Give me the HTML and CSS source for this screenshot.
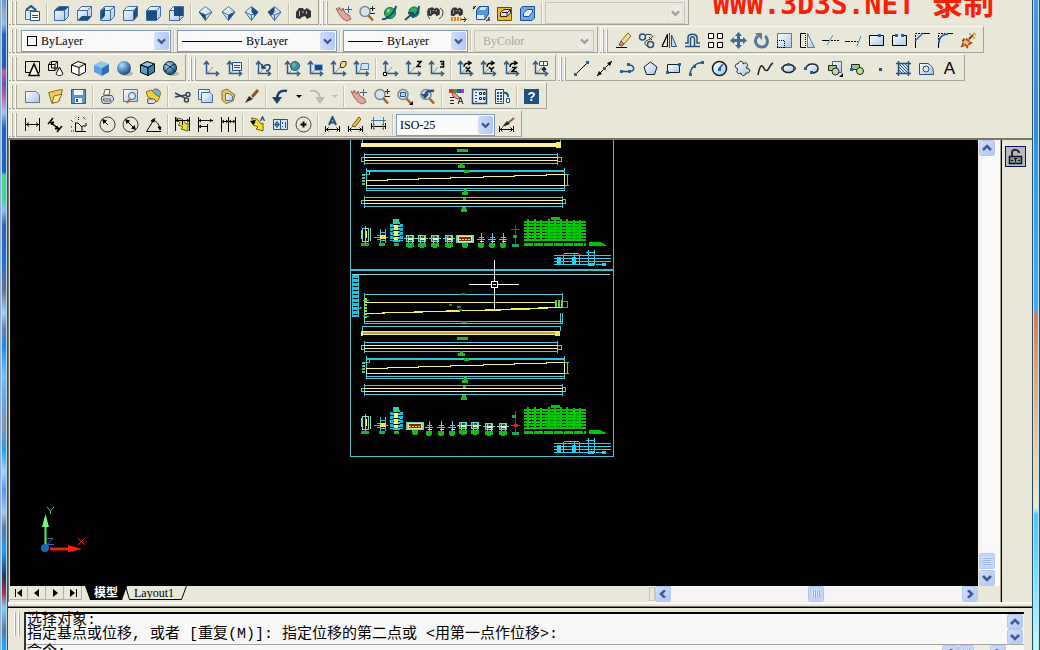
FILE: index.html
```html
<!DOCTYPE html>
<html lang="zh-CN">
<head>
    <meta charset="UTF-8">
    <meta name="viewport" content="width=device-width, initial-scale=1.0">
    <title>CAD</title>
    <link rel="stylesheet" href="styles.css">
</head>
<body>
    <!-- shared icon parts -->
    <svg class="defs" aria-hidden="true">
        <defs>
            <linearGradient id="ice" x1="0" y1="0" x2="1" y2="1"><stop offset="0" stop-color="#fff"/><stop offset="1" stop-color="#a9c4e4"/></linearGradient>
            <radialGradient id="ball" cx=".35" cy=".3" r=".8"><stop offset="0" stop-color="#b8dcf6"/><stop offset=".5" stop-color="#4c8cc4"/><stop offset="1" stop-color="#173d66"/></radialGradient>
            <g id="cube"><path fill="url(#ice)" stroke="#3d6d9e" d="M1.5 5.5L5.5 1.5H15.5V11.5L11.5 15.5H1.5ZM1.5 5.5H11.5V15.5M11.5 5.5L15.5 1.5"/></g>
            <g id="gem"><path fill="url(#ice)" stroke="#3d6d9e" d="M8.5 1.5L15 7 8.5 15.5 2 7ZM2 7L8.5 10 15 7M8.5 10V15.5"/></g>
            <g id="axes" fill="none" stroke="#2f5c8a"><path stroke="#7c93a8" d="M4 14L10 7"/><path stroke-width="1.500" d="M3.500 2V13.500H15M1 4.500L3.500 1.500 6 4.500M13 11.500L15.500 13.500 13 16"/></g>
            <g id="lens"><path stroke="#a5622a" stroke-width="2.500" d="M10 10L15 15.500"/><circle cx="7" cy="6.500" r="5" fill="#d4e4ee" stroke="#778793" stroke-width="1.500"/></g>
            <g id="hand"><path fill="#dfa79c" stroke="#a45e58" d="M1 3L4 5 4 2 7 6 8 3 10 8 14 10 16 14 12 16 8 14 4 9Z"/><path stroke="#2f6a96" d="M13.500 1V8M10 4.500H17"/></g>
            <g id="cam"><path fill="#333" d="M1 7L4 3H8L9 5 12 3 16 6V12L12 14 10 11 7 12 5 14 1 13Z"/><path fill="none" stroke="#bbb" d="M4.500 6V11M11.500 6V9M7 7H9"/></g>
            <g id="dim" fill="none" stroke="#000"><path d="M1.500 2V15M15.500 2V15M2 8.500H15M5 6.500L2.500 8.500 5 10.500M12 6.500L14.500 8.500 12 10.500"/></g>
            <g id="dimlow" fill="none" stroke="#000"><path d="M1.500 10V16M15.500 10V16M2 13.500H15M4.500 11.500L2.500 13.500 4.500 15.500M12.500 11.500L14.500 13.500 12.500 15.500"/></g>
            <g id="bolt"><path fill="#f2dc2c" stroke="#6e5e10" d="M2 2L8 3 12 8 14 7 14 15 7 13 9 11 4 9 6 7Z"/></g>
            <path id="chevron" fill="none" stroke="#3d5a90" stroke-width="2.500" d="M1 2L5 6L9 2"/>

            <g id="grid-table" fill="none" stroke="#00c800">
                <path d="M524 409.500H586M524 412.500H586M524 415.500H586M524 418.500H586M524 421.500H586M524 424.500H586M524 427.500H586" stroke-width="2"/>
                <path d="M527.500 407V428M534.500 407V428M540.500 408V428M549 407V429M555 405V429M561 407V429M567 407V429M574 408V429M579.500 408V427" stroke-width="2" stroke-dasharray="5 1"/>
                <path d="M545 420H562M568 420H580" stroke-width="17" opacity=".7"/>
                <path d="M551 406H560M524 432H586" stroke-width="3" stroke-dasharray="9 1"/>
                <path fill="#00c800" d="M589 430.500L601 431 606 433.500H589Z"/>
            </g>
            <g id="titleblock" fill="none" stroke="#22d4f0">
                <path d="M554 443.500H611M554 446.500H611M554 449.500H611M554 452.500H594M564 441.500H579M596 452.500H606" />
                <path d="M588.500 438V453M594.500 438V453M563.500 442V453M574.500 442V453M579.500 442V453M586 440.500H594"/>
                <path d="M557 448H561M572 448H576" stroke-width="7"/>
                <path d="M588 452H594M602 452H606" stroke-width="3"/>
            </g>
            <g id="node">
                <path fill="#245850" stroke="#6fd8c4" d="M-3.500 -3.500H3.500V2.500H-3.500ZM-6 -.5H6M-1.500 -4V4M2.500 -4V4"/>
                <path stroke="#ffff8c" stroke-width="2" d="M-2 0H3"/>
                <path stroke="#18b818" stroke-width="4" d="M-4 6H4M0 4V9"/>
            </g>
            <g id="tick">
                <path stroke="#50d0dc" d="M0.500 -6V4M-4 0.500H4M-2 -1.500H3"/><path stroke="#dcf0a0" d="M-1 2.500H3"/>
                <path stroke="#18b818" stroke-width="4" d="M-3 6H3M0 5V9"/>
            </g>
            <g id="plate">
                <path fill="#802800" stroke="#6fd8c4" stroke-width="2" d="M-8 -3H8V3H-8Z"/><path stroke="#ffd860" stroke-dasharray="2 1" d="M-6 .5H6"/><path fill="none" stroke="#e8e8a0" d="M-6.500 -2.500H6.500V2.500H-6.500Z"/>
                <path stroke="#18b818" stroke-width="4" d="M-3 6H3M0 5V9"/>
            </g>
            <g id="columns">
                <path fill="none" stroke="#7fdcc0" d="M362.500 416.500H368.500V429.500H362.500ZM365.500 414V433M361.500 418V427M370.500 416V429"/><path stroke="#ffff60" d="M366.500 419V426"/>
                <path fill="none" stroke="#30c8d8" d="M374 425.500H388M380.500 417V432M385.500 417V431M380 420.500H385M380 428.500H386M377 423.500H380M377 427.500H380"/><path stroke="#ffe040" stroke-width="4" d="M380 425H386"/>
                <path stroke="#14bcd8" stroke-width="3" stroke-dasharray="3 1" d="M391.500 412V429M401.500 412V429"/><path stroke="#28c8c8" stroke-width="7" stroke-dasharray="2 1" d="M396.500 410V430"/><path stroke="#ffff50" stroke-width="4" stroke-dasharray="5 1" d="M396 413V428"/><path stroke="#30d0a0" stroke-width="6" d="M396 407V411"/>
                <path stroke="#18b818" stroke-width="3" d="M361 432H369M379 432H385M394 432H399"/>
            </g>
            <g id="beams" fill="none">
                <path stroke="#50c8d8" d="M362 326.500H561M362.500 326V331M560.500 326V331M364 342.500H558M364 351.500H558M364.500 341V353M557.500 341V353M361 345.500H364M361.500 345V350M361 349.500H364M558 345.500H561V349.500H558M366 376.500H565M366 378.500H565M366.500 356V378M564.500 356V379M567.500 362V373M565 362.500H569M565 373.500H569M364 385.500H563M364 394.500H563M364.500 384V396M562.500 384V396M361 388.500H364M361 391.500H364M361.500 388V392M562 387.500H565V391.500H562"/>
                <path stroke="#30c4d8" stroke-width="2" d="M366 359H565"/>
                <path stroke="#38c8a8" stroke-width="3" stroke-dasharray="2 1" d="M363 362V374"/>
                <path stroke="#38c8a8" d="M362 362.500H369V358"/>
                <path stroke="#f8f090" d="M364 345.500H558M364 348.500H558M366 368.500H387V367.500H418V366.500H450V365.500H483V364.500H514V363.500H546V362.500H564M366 373.500H564V362M366.500 368V373M364 388.500H563M364 391.500H563"/>
                <path stroke="#20b828" stroke-width="3" d="M457 338H468M458 354H465M460 352H463M464 359H469M465 377V380M462 381.500H468M464 386V388M461 398H467M462 396.500H466"/>
            </g>
        </defs>
    </svg>

    <div class="desktop">
        <div class="edge edge-left"></div>
        <main class="app">
            <header class="toolbars">
                <div class="row row-first">
                    <div class="toolbar">
                        <span class="grip"></span>
                        <button class="tool" aria-label="Named views"><svg><path fill="#d5e6f7" stroke="#456f9c" d="M1.500 5.500H12.500V14.500H1.500Z"/><path fill="#fff" stroke="#24517e" d="M6.500 6.500H15.500V15.500H6.500ZM8 10.500H14M8 12.500H14"/><path fill="none" stroke="#24517e" stroke-width="2" d="M2 5L7 1 12 5"/></svg></button>
                        <span class="sep"></span>
                        <button class="tool" aria-label="Top view"><svg><use href="#cube"/><path fill="#1d4d80" d="M2 5L6 2H15L12 5Z"/></svg></button>
                        <button class="tool" aria-label="Bottom view"><svg><use href="#cube"/><path fill="#1d4d80" d="M2 15L6 11H15L12 15Z"/></svg></button>
                        <button class="tool" aria-label="Left view"><svg><use href="#cube"/><path fill="#1d4d80" d="M2 6L6 2V11L2 15Z"/></svg></button>
                        <button class="tool" aria-label="Right view"><svg><use href="#cube"/><path fill="#1d4d80" d="M12 6L15 2V11L12 15Z"/></svg></button>
                        <button class="tool" aria-label="Front view"><svg><use href="#cube"/><path fill="#1d4d80" d="M2 6H12V15H2Z"/></svg></button>
                        <button class="tool" aria-label="Back view"><svg><use href="#cube"/><path fill="#1d4d80" d="M6 2H15V11H6Z"/></svg></button>
                        <span class="sep"></span>
                        <button class="tool" aria-label="SW isometric"><svg><use href="#gem"/><path fill="#1d4d80" d="M2 7L8.500 10V15.500Z"/></svg></button>
                        <button class="tool" aria-label="SE isometric"><svg><use href="#gem"/><path fill="#1d4d80" d="M15 7L8.500 10V15.500Z"/></svg></button>
                        <button class="tool" aria-label="NE isometric"><svg><use href="#gem"/><path fill="#1d4d80" d="M8.500 1.500L15 7 12 11 8.500 7Z"/></svg></button>
                        <button class="tool" aria-label="NW isometric"><svg><use href="#gem"/><path fill="#1d4d80" d="M8.500 1.500L2 7 5 11 8.500 7Z"/></svg></button>
                        <span class="sep"></span>
                        <button class="tool" aria-label="Camera"><svg><use href="#cam"/></svg></button>
                    </div>
                    <div class="toolbar">
                        <span class="grip"></span>
                        <button class="tool" aria-label="3D pan"><svg><use href="#hand"/></svg></button>
                        <button class="tool" aria-label="3D zoom"><svg><use href="#lens"/><path stroke="#222" d="M12 3.500H17M14.500 1V6M12 8.500H17"/></svg></button>
                        <button class="tool" aria-label="3D orbit"><svg><circle cx="9" cy="8" r="5.500" fill="#2fae58" stroke="#17683a"/><path fill="none" stroke="#174f77" stroke-width="2" d="M1 14C5 15 14 8 15 1"/><path fill="#c5f0b0" d="M6 5L9 4 7 8Z"/></svg></button>
                        <button class="tool" aria-label="Continuous orbit"><svg><circle cx="10" cy="7" r="5" fill="#2fae58" stroke="#17683a"/><path fill="none" stroke="#174f77" stroke-width="2" d="M1 15L8 9M4 8H9V13M10 11C13 9 15 5 15 1"/></svg></button>
                        <button class="tool" aria-label="Swivel"><svg><use href="#cam" transform="scale(.8)"/><path fill="none" stroke="#333" d="M13 3C17 5 17 11 12 14M2 3C0 6 0 11 3 14"/></svg></button>
                        <button class="tool" aria-label="Adjust distance"><svg><use href="#cam" transform="scale(.8)"/><path stroke="#d88a28" stroke-width="4" stroke-dasharray="2 1" d="M1 14H11"/><path fill="none" stroke="#222" d="M11 14.500H16M14 12L16 14.500 14 17"/></svg></button>
                        <button class="tool" aria-label="Adjust clip planes"><svg><path fill="#5c95dc" stroke="#194f96" d="M3.500 5.500L6 1.500H15.500V9L12 14.500H3.500Z"/><path fill="#d4e8ff" d="M6 5L8 2H14L12 5Z"/><path stroke="#000" d="M0 4L3 1M1 1V4M13 16L16 14M16 12V16"/><path fill="#e4efff" d="M4 10H11V14H4Z"/></svg></button>
                        <button class="tool" aria-label="Front clip"><svg><path fill="#f0b820" stroke="#694c10" d="M1.500 2.500H15.500V15.500H1.500Z"/><path fill="#ddd" stroke="#222" d="M4.500 7.500L8 4.500H14.500V8L11 11.500H4.500ZM6 7.500H11V11M11 8L14 5"/></svg></button>
                        <button class="tool" aria-label="Back clip"><svg><path fill="#76aae6" stroke="#194f96" d="M1.500 3.500L4 1.500H15.500V13L13 15.500H1.500Z"/><path fill="#e8f3ff" stroke="#194f96" d="M4.500 8.500L8 4.500H13.500V7L10 11.500H4.500Z"/></svg></button>
                        <span class="sep"></span>
                        <span class="combo off view-combo"><select disabled aria-label="View"><option></option></select><i><svg viewBox="0 0 10 8"><use href="#chevron"/></svg></i></span>
                    </div>
                </div>

                <div class="row">
                    <div class="toolbar">
                        <span class="grip"></span>
                        <span class="combo color-combo"><b class="swatch"></b><select aria-label="Color"><option>ByLayer</option></select><i><svg viewBox="0 0 10 8"><use href="#chevron"/></svg></i></span>
                        <span class="sep"></span>
                        <span class="combo type-combo"><b class="rule"></b><select aria-label="Linetype"><option>ByLayer</option></select><i><svg viewBox="0 0 10 8"><use href="#chevron"/></svg></i></span>
                        <span class="sep"></span>
                        <span class="combo weight-combo"><b class="rule"></b><select aria-label="Lineweight"><option>ByLayer</option></select><i><svg viewBox="0 0 10 8"><use href="#chevron"/></svg></i></span>
                        <span class="sep"></span>
                        <span class="combo off plot-combo"><select disabled aria-label="Plot style"><option>ByColor</option></select><i><svg viewBox="0 0 10 8"><use href="#chevron"/></svg></i></span>
                    </div>
                    <div class="toolbar">
                        <span class="grip"></span>
                        <button class="tool" aria-label="Erase"><svg><path fill="#f0dc8c" stroke="#8c6430" d="M6 9L13 1 16 4 9 12Z"/><path fill="#d88870" stroke="#8c4c3c" d="M4 13L6 9 9 12 7 14Z"/><path stroke="#000" d="M1 15.500H12"/></svg></button>
                        <button class="tool" aria-label="Copy object"><svg fill="none"><circle cx="4.500" cy="5" r="3" stroke="#24517e" stroke-width="1.500"/><path stroke="#334" d="M8 2.500H12C15 3 15 6 12 7L8 9C6 11 7 14 10 14M11 5L14 8"/><circle cx="12.500" cy="12.500" r="3" stroke="#24517e" stroke-width="1.500"/></svg></button>
                        <button class="tool" aria-label="Mirror"><svg fill="none"><path stroke="#000" d="M6.500 2V14.500H1ZM1 14.500L6.500 3"/><path fill="#c4daf0" stroke="#24517e" d="M10.500 3V14.500H15.500Z"/><path stroke="#24517e" d="M8.500 1V16"/></svg></button>
                        <button class="tool" aria-label="Offset"><svg fill="none"><path stroke="#24517e" stroke-width="1.500" d="M1 14.500H16M1 11H4V5.500C4 1 13 1 13 5.500V11H16M6.500 14V6.500C7 4 10 4 10.500 6.500V14"/></svg></button>
                        <button class="tool" aria-label="Array"><svg fill="#fff" stroke="#000"><path d="M1.500 1.500H6.500V6.500H1.500ZM10.500 1.500H15.500V6.500H10.500ZM1.500 10.500H6.500V15.500H1.500ZM10.500 10.500H15.500V15.500H10.500Z"/></svg></button>
                        <button class="tool" aria-label="Move"><svg fill="#3c6c9c"><path d="M8.500 0L12 4H10V7H13V5L17 8.500 13 12V10H10V13H12L8.500 17 5 13H7V10H4V12L0 8.500 4 5V7H7V4H5Z"/></svg></button>
                        <button class="tool" aria-label="Rotate"><svg fill="none"><path stroke="#54799c" stroke-width="3" d="M5 4C0 8 3 15 9 15C15 15 16 7 12 4"/><path fill="#54799c" d="M2 1H9V8Z"/></svg></button>
                        <button class="tool" aria-label="Scale"><svg><path fill="url(#ice)" stroke="#54799c" d="M1.500 1.500H15.500V15.500H1.500Z"/><path fill="none" stroke="#000" stroke-dasharray="1 1" d="M1 8.500H8.500V16M1.500 8V16M1 15.500H8"/></svg></button>
                        <button class="tool" aria-label="Stretch"><svg><path fill="url(#ice)" stroke="#54799c" d="M8.500 1.500L15.500 15.500H8.500Z"/><path fill="none" stroke="#000" d="M6.500 1.500H1.500V15.500H6.500"/><path stroke="#000" stroke-dasharray="1 1" d="M6.500 1V16"/></svg></button>
                        <button class="tool" aria-label="Trim"><svg fill="none"><path stroke="#000" d="M0 8.500H7"/><path stroke="#000" stroke-dasharray="2 1" d="M9 8.500H17"/><path stroke="#4c88b8" d="M5 13L11 3"/></svg></button>
                        <button class="tool" aria-label="Extend"><svg fill="none"><path stroke="#000" d="M0 9.500H5"/><path stroke="#000" stroke-dasharray="2 1" d="M6 9.500H13"/><path stroke="#4c88b8" d="M12 14L16 4"/></svg></button>
                        <button class="tool" aria-label="Break at point"><svg><path fill="url(#ice)" stroke="#000" d="M1.500 3.500H15.500V13.500H1.500Z"/><path fill="#24639a" d="M10 2H13V5H10Z"/></svg></button>
                        <button class="tool" aria-label="Break"><svg><path fill="url(#ice)" stroke="#000" d="M5 3.500H1.500V13.500H15.500V3.500H12"/><path fill="#24639a" d="M4 2H7V5H4ZM10 2H13V5H10Z"/></svg></button>
                        <button class="tool" aria-label="Chamfer"><svg fill="none"><path stroke="#000" stroke-dasharray="2 1" d="M1.500 8V1.500H8"/><path stroke="#000" d="M1.500 16V8M8 1.500H16"/><path stroke="#2e65b0" stroke-width="1.500" d="M1 9L9 1"/></svg></button>
                        <button class="tool" aria-label="Fillet"><svg fill="none"><path stroke="#000" stroke-dasharray="2 1" d="M1.500 8V1.500H8"/><path stroke="#000" d="M1.500 16V9M10 1.500H16"/><path stroke="#2e65b0" stroke-width="2" d="M2 11C2 5 6 2 11 2"/></svg></button>
                        <button class="tool" aria-label="Explode"><svg><path fill="#f0c060" stroke="#a83c18" stroke-dasharray="2 1" stroke-width="2" d="M3 7L5 8 8 7 9 10 11 11 8 13 7 15 5 13 2 14 3 11Z"/><path stroke="#444" stroke-width="2" d="M9 7L13 3"/><path stroke="#f0a030" stroke-width="2" d="M13 1L16 3M12 5L15 6M10 1V3"/></svg></button>
                    </div>
                </div>

                <div class="row">
                    <div class="toolbar">
                        <span class="grip"></span>
                        <button class="tool" aria-label="2D wireframe"><svg fill="none" stroke="#000"><path d="M1.500 1.500H15.500V12.500H1.500Z"/><path fill="#fff" stroke-width="1.500" d="M5 15.500L10 4 15 15.500Z"/></svg></button>
                        <button class="tool" aria-label="3D wireframe"><svg fill="none" stroke="#000"><path d="M1.500 4.500L4 1.500H10.500V8L8 10.500H1.500ZM1.500 4.500H8V10.500M8 4.500L10.500 1.500M4.500 2V8H10"/><path fill="#fff" d="M9 14L12.500 7 16 14C15 16 10 16 9 14Z"/></svg></button>
                        <button class="tool" aria-label="Hidden"><svg><path fill="#fff" stroke="#000" d="M1.500 5L8 1.500 15.500 4V12L9 15.500 1.500 12.500ZM1.500 5L9 7.500 15.500 4M9 7.500V15.500"/></svg></button>
                        <button class="tool" aria-label="Flat shaded"><svg><path fill="#8cc4f0" d="M1 5L8 1 16 4 9 8Z"/><path fill="#5ca0e0" d="M1 5L9 8V16L1 12Z"/><path fill="#2c70b8" d="M9 8L16 4V12L9 16Z"/></svg></button>
                        <button class="tool" aria-label="Gouraud shaded"><svg><ellipse cx="11" cy="13.500" rx="6" ry="2.500" fill="#b5b4a9"/><circle cx="8" cy="8" r="7" fill="url(#ball)"/></svg></button>
                        <button class="tool" aria-label="Flat shaded, edges on"><svg stroke="#000"><path fill="#8cc4f0" d="M1.500 5L8 1.500 15.500 4 9 7.500Z"/><path fill="#5c9ccc" d="M1.500 5L9 7.500V15.500L1.500 12.500Z"/><path fill="#4080b0" d="M9 7.500L15.500 4V12L9 15.500Z"/></svg></button>
                        <button class="tool" aria-label="Gouraud shaded, edges on"><svg><ellipse cx="11" cy="13.500" rx="6" ry="2.500" fill="#b5b4a9"/><circle cx="8" cy="8" r="6.500" fill="url(#ball)" stroke="#122"/><path fill="none" stroke="#122" d="M3 4C8 6 11 9 13 12M13 4C8 6 5 9 3 12"/></svg></button>
                    </div>
                    <div class="toolbar">
                        <span class="grip"></span>
                        <button class="tool" aria-label="UCS"><svg><use href="#axes"/></svg></button>
                        <button class="tool" aria-label="Display UCS dialog"><svg><use href="#axes"/><path fill="#eaf3fc" stroke="#24517e" d="M6.500 2.500H15.500V10.500H6.500ZM8 5.500H14M8 7.500H14"/></svg></button>
                        <span class="sep"></span>
                        <button class="tool" aria-label="UCS previous"><svg><use href="#axes"/><path fill="none" stroke="#123a68" stroke-width="1.500" d="M8 7C11 3 16 5 15 7C15 9 13 11 11 11M7 4V8H11"/></svg></button>
                        <span class="sep"></span>
                        <button class="tool" aria-label="World UCS"><svg><use href="#axes"/><circle cx="11" cy="6" r="4.500" fill="#3f88b8" stroke="#174f77"/><path fill="#5cc070" d="M8 4L11 2 12 6 9 8Z"/></svg></button>
                        <button class="tool" aria-label="Object UCS"><svg><use href="#axes"/><path fill="#1c4e86" stroke="#8fb4dc" d="M7.500 4.500H15.500V10.500H7.500Z"/></svg></button>
                        <button class="tool" aria-label="Face UCS"><svg><use href="#axes"/><path fill="#f0e478" stroke="#333" d="M10.500 4L12 1.500H16V5L14 7.500H10.500Z"/></svg></button>
                        <button class="tool" aria-label="View UCS"><svg><use href="#axes"/><path fill="#cfe2f6" stroke="#4c80b4" d="M8.500 3.500H15.500V9.500H7.500Z"/></svg></button>
                        <span class="sep"></span>
                        <button class="tool" aria-label="Origin UCS"><svg><use href="#axes"/><path fill="#fff" stroke="#000" d="M1.500 12.500H4.500V15.500H1.500Z"/></svg></button>
                        <button class="tool" aria-label="Z axis vector"><svg><use href="#axes"/><path fill="none" stroke="#000" stroke-width="1.500" d="M12 1.500H16L12 6.500H16"/></svg></button>
                        <button class="tool" aria-label="3 point UCS"><svg><use href="#axes"/><path fill="none" stroke="#000" stroke-width="1.500" d="M12 1.500H15.500V4H13M15.500 4V7H12"/></svg></button>
                        <span class="sep"></span>
                        <button class="tool" aria-label="Rotate X"><svg><use href="#axes"/><path fill="none" stroke="#000" stroke-width="1.500" d="M9 7L13 12M13 7L9 12M7 7C7 3 10 3 13 3M11 1L14 3 11 5"/></svg></button>
                        <button class="tool" aria-label="Rotate Y"><svg><use href="#axes"/><path fill="none" stroke="#000" stroke-width="1.500" d="M9 7L11.500 9.500 14 7M11.500 9V12M7 7C7 3 10 3 13 3M11 1L14 3 11 5"/></svg></button>
                        <button class="tool" aria-label="Rotate Z"><svg><use href="#axes"/><path fill="none" stroke="#000" stroke-width="1.500" d="M9 7.500H13L9 11.500H14M7 7C7 3 10 3 13 3M11 1L14 3 11 5"/></svg></button>
                        <span class="sep"></span>
                        <button class="tool" aria-label="Apply UCS"><svg><use href="#axes"/><path fill="#fff" stroke="#24517e" d="M7.500 1.500H15.500V5.500H7.500ZM11.500 1V5"/><path fill="none" stroke="#123" stroke-width="1.500" d="M12 12V8M10 10L12 7.500 14 10"/></svg></button>
                    </div>
                    <div class="toolbar">
                        <span class="grip"></span>
                        <button class="tool" aria-label="Line"><svg><path stroke="#000" d="M3 14L14 3"/><path fill="#24639a" d="M1 13H4V16H1ZM13 1H16V4H13Z"/></svg></button>
                        <button class="tool" aria-label="Construction line"><svg><path stroke="#000" d="M1 16L16 1"/><path d="M16 1L11 3 14 6ZM1 16L6 14 3 11Z"/><path fill="#24639a" d="M7 7H10V10H7Z"/></svg></button>
                        <button class="tool" aria-label="Polyline"><svg><path fill="none" stroke="#24517e" stroke-width="1.500" d="M2 11.500H11C17 11 15 5 10 5"/><path fill="#24639a" d="M1 10H4V13H1ZM8 3H11V6H8ZM9 10H12V13H9Z"/></svg></button>
                        <button class="tool" aria-label="Polygon"><svg><path fill="url(#ice)" stroke="#122" d="M8.500 2L15 7 12.500 14.500H4.500L2 7Z"/></svg></button>
                        <button class="tool" aria-label="Rectangle"><svg><path fill="url(#ice)" stroke="#122" d="M2.500 4.500H14.500V12.500H2.500Z"/><path fill="#24639a" d="M1 11H4V14H1ZM13 3H16V6H13Z"/></svg></button>
                        <button class="tool" aria-label="Arc"><svg><path fill="none" stroke="#24517e" stroke-width="1.500" d="M2 14C3 7 8 3 14 2.500"/><path fill="#24639a" d="M1 13H4V16H1ZM13 1H16V4H13ZM5 5H8V8H5Z"/></svg></button>
                        <button class="tool" aria-label="Circle"><svg><circle cx="8.500" cy="8.500" r="7" fill="url(#ice)" stroke="#122" stroke-width="1.500"/><path stroke="#24517e" stroke-width="1.500" d="M8 9L12 4"/><path fill="#24639a" d="M7 8H10V11H7Z"/></svg></button>
                        <button class="tool" aria-label="Revision cloud"><svg><path fill="url(#ice)" stroke="#122" d="M4 9C0 8 1 3 4 4C5 0 10 1 9 4C13 1 15 5 12 8C17 8 17 14 12 13C11 17 7 16 7 13C3 15 2 11 4 9Z"/></svg></button>
                        <button class="tool" aria-label="Spline"><svg><path fill="none" stroke="#223" stroke-width="1.500" d="M1 15C4 0 6 7 8 10C12 13 12 4 16 3"/></svg></button>
                        <button class="tool" aria-label="Ellipse"><svg><ellipse cx="8.500" cy="8.500" rx="6" ry="4" fill="url(#ice)" stroke="#122" stroke-width="1.500"/><path fill="#24639a" d="M1 7H4V10H1ZM13 7H16V10H13ZM7 3H10V6H7Z"/></svg></button>
                        <button class="tool" aria-label="Ellipse arc"><svg><path fill="url(#ice)" stroke="#223" stroke-width="1.500" d="M3 8C5 2 15 3 15 8.500C15 12 11 13 8 13"/><path fill="#24639a" d="M1 7H4V10H1ZM7 11H10V14H7Z"/></svg></button>
                        <button class="tool" aria-label="Insert block"><svg><path fill="url(#ice)" stroke="#3c6c9c" d="M6.500 1.500H15.500V12.500H6.500Z"/><path fill="#9cc870" stroke="#223" d="M2.500 5.500H10.500V10.500H2.500Z"/><circle cx="9.500" cy="11.500" r="3.500" fill="#b8dc90" stroke="#223"/><path d="M17 13V17H13Z"/></svg></button>
                        <button class="tool" aria-label="Make block"><svg><path fill="#9cc870" stroke="#223" d="M2.500 4.500H10.500V9.500H2.500Z"/><circle cx="11" cy="11" r="3.500" fill="#b8dc90" stroke="#223"/><path fill="#24639a" d="M1 8H4V11H1Z"/></svg></button>
                        <button class="tool" aria-label="Point"><svg><path fill="#24517e" d="M7 8H10V11H7Z"/></svg></button>
                        <button class="tool" aria-label="Hatch"><svg><path fill="#dbe9f7" d="M3 3H14V14H3Z"/><path fill="none" stroke="#24517e" stroke-width="1.500" d="M3.500 1V16M13.500 1V16M1 3.500H16M1 13.500H16"/><path stroke="#24517e" d="M4 7L10 13M4 10L7 13M4 4L13 13M7 4L13 10M10 4L13 7"/></svg></button>
                        <button class="tool" aria-label="Region"><svg><path fill="url(#ice)" stroke="#24517e" d="M1.500 3.500H10C14 6 15.500 8 15.500 14.500H1.500Z"/><circle cx="8" cy="9" r="3" fill="#e8e7d8" stroke="#24517e"/></svg></button>
                        <button class="tool letter">A</button>
                    </div>
                </div>

                <div class="row">
                    <div class="toolbar">
                        <span class="grip"></span>
                        <button class="tool" aria-label="New"><svg><path fill="url(#ice)" stroke="#54799c" d="M1.500 3.500H12L15.500 7V14.500H1.500Z"/></svg></button>
                        <button class="tool" aria-label="Open"><svg><path fill="#f0cc60" stroke="#8c6c1c" d="M1.500 4.500L6 3.500 9 2.500 15.500 1.500 12 13 5 15.500Z"/><path fill="#fbe9a0" stroke="#8c6c1c" d="M5 15L7 8 15 6 11 14Z"/></svg></button>
                        <button class="tool" aria-label="Save"><svg><path fill="#5c90c8" stroke="#2c5c94" d="M1.500 1.500H15.500V15.500H1.500Z"/><path fill="#eef5fc" d="M4 2H13V7H4ZM5 10H12V15H5Z"/><path fill="#2c5c94" d="M6 11H8V14H6Z"/></svg></button>
                        <span class="sep"></span>
                        <button class="tool" aria-label="Plot"><svg stroke="#556"><path fill="#fff" d="M4.500 7L6 1.500H11L10 7Z"/><path fill="#cdd5df" d="M2.500 9L6 7.500H13L14.500 10V12L11 15.500H4L2.500 13Z"/><path fill="#fff" d="M4 11H11L12 13H5Z"/></svg></button>
                        <button class="tool" aria-label="Plot preview"><svg><path fill="url(#ice)" stroke="#54799c" d="M1.500 1.500H15.500V13.500H1.500Z"/><circle cx="10" cy="8" r="3.500" fill="#d8ecfa" stroke="#456"/><path stroke="#a5622a" stroke-width="2" d="M8 11L5 15"/></svg></button>
                        <button class="tool" aria-label="Publish"><svg><circle cx="11" cy="5.500" r="4.500" fill="#6cb0e0" stroke="#8c6c1c"/><path fill="#f4d038" stroke="#8c6c1c" d="M1 4L6 2 11 7 15 9 12 14 7 11 3 9Z"/><path fill="#ddd" stroke="#556" d="M2.500 11H9L11 13 9 15.500H3Z"/></svg></button>
                        <span class="sep"></span>
                        <button class="tool" aria-label="Cut"><svg fill="none" stroke="#345" stroke-width="1.500"><path d="M1 5L11 10M1 9L12 7"/><circle cx="14" cy="6.500" r="2"/><circle cx="12.500" cy="12" r="2"/></svg></button>
                        <button class="tool" aria-label="Copy"><svg fill="url(#ice)" stroke="#3c6c9c"><path d="M1.500 1.500H12.500V11.500H1.500Z"/><path d="M4.500 4.500H13L15.500 7V14.500H4.500Z"/></svg></button>
                        <button class="tool" aria-label="Paste"><svg><path fill="#e8c860" stroke="#8c7020" d="M2 3L7 1 15 7 13 13 6 15.500 2 12Z"/><path fill="url(#ice)" stroke="#54799c" d="M5.500 5.500H9L12.500 8V12.500H5.500Z"/></svg></button>
                        <button class="tool" aria-label="Match properties"><svg><path stroke="#8c5428" stroke-width="3" d="M15 2L9 9"/><path fill="#332c28" d="M2 15L6 8 10 11Z"/></svg></button>
                        <span class="sep"></span>
                        <button class="tool" aria-label="Undo"><svg><path fill="none" stroke="#17406e" stroke-width="2.500" d="M15 3C8 2 5 5 5 12"/><path fill="#17406e" d="M0 9H10L5 16Z"/></svg></button>
                        <button class="tool drop" aria-label="Undo list"><svg viewBox="0 0 7 17"><path d="M1 7H7L4 10Z"/></svg></button>
                        <button class="tool" aria-label="Redo"><svg><path fill="none" stroke="#bbb9ac" stroke-width="2" d="M2 3C9 2 12 5 12 12"/><path fill="#bbb9ac" d="M7 9H17L12 16Z"/></svg></button>
                        <button class="tool drop" aria-label="Redo list"><svg viewBox="0 0 7 17"><path fill="#bbb9ac" d="M1 7H7L4 10Z"/></svg></button>
                        <span class="sep"></span>
                        <button class="tool" aria-label="Pan"><svg><use href="#hand"/></svg></button>
                        <button class="tool" aria-label="Zoom realtime"><svg><use href="#lens"/><path stroke="#222" d="M12 3.500H17M14.500 1V6M12 8.500H17"/></svg></button>
                        <button class="tool" aria-label="Zoom window"><svg><use href="#lens"/><path fill="#b8d8f4" stroke="#24517e" d="M4.500 4.500H9.500V8.500H4.500Z"/><path d="M17 13V17H13Z"/></svg></button>
                        <button class="tool" aria-label="Zoom previous"><svg><use href="#lens"/><path fill="none" stroke="#24517e" stroke-width="2.500" d="M6 8C7 3 11 2 15 3"/><path fill="#24517e" d="M2 6H10L6 11Z"/></svg></button>
                        <span class="sep"></span>
                        <button class="tool" aria-label="Properties"><svg><path fill="#d83030" d="M1 1H5V5H1Z"/><path fill="#38a838" d="M5 1H9V5H5Z"/><path fill="#3848c8" d="M9 1H13V5H9Z"/><path fill="#a838c8" d="M13 1H16V5H13Z"/><path fill="#e8a890" stroke="#8c4c40" d="M4 4L8 6 12 10 9 11 5 8Z"/><path fill="none" stroke="#223" d="M2 9.500H6M2 12.500H6M2 15.500H6M10 16L12.500 9 15 16M11 13.500H14"/></svg></button>
                        <button class="tool" aria-label="DesignCenter"><svg><path fill="#e4eefa" stroke="#24517e" stroke-width="1.500" d="M1.500 1.500H15.500V15.500H1.500Z"/><path stroke="#24517e" d="M4 4.500H6M4 7.500H6M4 10.500H6M4 13.500H6"/><path fill="#fff" stroke="#222" d="M8.500 4.500H10.500V6.500H8.500ZM12.500 4.500H14V6.500H12.500ZM8.500 9.500H10.500V11.500H8.500ZM12.500 9.500H14V11.500H12.500Z"/></svg></button>
                        <button class="tool" aria-label="Tool palettes"><svg><path fill="#e4eefa" stroke="#24517e" d="M1.500 1.500H9.500V15.500H1.500Z"/><path stroke="#24517e" stroke-width="2" stroke-dasharray="2 1" d="M4 4V14M7 4V14"/><path fill="none" stroke="#24517e" stroke-width="2" d="M9 5C13 4 14 6 14 9"/><path fill="#fff" stroke="#24517e" d="M12.500 10.500H15.500V14.500H12.500Z"/></svg></button>
                        <span class="sep"></span>
                        <button class="tool help" aria-label="Help"><b>?</b></button>
                    </div>
                </div>

                <div class="row">
                    <div class="toolbar">
                        <span class="grip"></span>
                        <button class="tool" aria-label="Linear dimension"><svg><use href="#dim"/></svg></button>
                        <button class="tool" aria-label="Aligned dimension"><svg fill="none" stroke="#000"><path stroke-width="1.500" d="M3 6L12 13M1 8L6 2M10 16L15 10"/><path fill="#000" d="M3 6L7 6 5 9ZM12 13L8 13 10 10Z"/></svg></button>
                        <button class="tool" aria-label="Ordinate dimension"><svg fill="none" stroke="#000"><path d="M5.500 7V15.500H16M5 7H8L12 11V15M12 10H16V7"/><path stroke-dasharray="1 1" d="M1 4L3 6M8.500 1V5M13 1L16 4M1 11H3M1 15H4"/></svg></button>
                        <span class="sep"></span>
                        <button class="tool" aria-label="Radius dimension"><svg><circle cx="8.500" cy="8.500" r="7.500" fill="none" stroke="#333"/><path stroke="#000" d="M5 5L9 9"/><path d="M3 3L8 4.500 4.500 8Z"/></svg></button>
                        <button class="tool" aria-label="Diameter dimension"><svg><circle cx="8.500" cy="8.500" r="7.500" fill="none" stroke="#333"/><path stroke="#000" d="M4 4L13 13"/><path d="M3 3L8 4.500 4.500 8ZM14 14L9 12.500 12.500 9Z"/></svg></button>
                        <button class="tool" aria-label="Angular dimension"><svg fill="none" stroke="#000"><path d="M10 2L1.500 15.500H16M7 4C12 5 14 8 15 13"/><path fill="#000" d="M6 5L9 3V6ZM13 11L16 11 15 14Z"/></svg></button>
                        <span class="sep"></span>
                        <button class="tool" aria-label="Quick dimension"><svg><use href="#bolt"/><path fill="none" stroke="#000" d="M1.500 1V15M15.500 1V15M2 4.500H15M8.500 4V9M4 3L2 4.500 4 6M13 3L15 4.500 13 6"/></svg></button>
                        <button class="tool" aria-label="Baseline dimension"><svg fill="none" stroke="#000"><path d="M1.500 1V16M2 4.500H16M2 10.500H10M10.500 8V16M4 3L2 4.500 4 6M4 9L2 10.500 4 12M13 3L15 4.500 13 6"/></svg></button>
                        <button class="tool" aria-label="Continue dimension"><svg fill="none" stroke="#000"><path d="M1.500 1V16M8.500 1V16M15.500 1V16M2 5.500H15M4 4L2 5.500 4 7M6 4L8 5.500 6 7M11 4L9 5.500 11 7M13 4L15 5.500 13 7"/></svg></button>
                        <span class="sep"></span>
                        <button class="tool" aria-label="Quick leader"><svg><use href="#bolt"/><path d="M1 5L7 4 4 9Z"/><path fill="none" stroke="#24517e" stroke-width="1.500" d="M11.500 5L13.500 1 15.500 5"/></svg></button>
                        <button class="tool" aria-label="Tolerance"><svg><path fill="#d8e8fa" stroke="#24517e" d="M1.500 3.500H15.500V13.500H1.500ZM8.500 3V14"/><circle cx="5" cy="8.500" r="2" fill="none" stroke="#24517e"/><path stroke="#24517e" d="M5 5V12M2.500 8.500H7.500M10.500 6V8M10.500 10V11M13.500 6V12"/></svg></button>
                        <button class="tool" aria-label="Center mark"><svg><circle cx="8.500" cy="8.500" r="7.500" fill="none" stroke="#444"/><path stroke="#000" stroke-width="2" d="M8.500 5.500V11.500M5.500 8.500H11.500"/></svg></button>
                        <span class="sep"></span>
                        <button class="tool" aria-label="Dimension text edit"><svg><use href="#dimlow"/><path fill="none" stroke="#24517e" stroke-width="2" d="M5 9L8.500 1 12 9M6 6.500H11"/></svg></button>
                        <button class="tool" aria-label="Dimension edit"><svg><use href="#dimlow"/><path fill="#f0c83c" stroke="#6c5010" d="M5 10L12 1 14 3 8 11Z"/></svg></button>
                        <button class="tool" aria-label="Dimension update"><svg><use href="#dimlow" transform="translate(0 -3)"/><path fill="none" stroke="#3478b8" d="M3.500 1V14M13.500 1V14M4 4.500H16M1 4.500H3"/></svg></button>
                        <span class="sep"></span>
                        <span class="combo dim-combo"><select aria-label="Dimension style"><option>ISO-25</option></select><i><svg viewBox="0 0 10 8"><use href="#chevron"/></svg></i></span>
                        <button class="tool" aria-label="Dimension style manager"><svg><use href="#dimlow"/><path stroke="#9c6030" stroke-width="2" d="M16 2L10 7"/><path fill="#222" d="M4 11L9 5 12 8Z"/></svg></button>
                    </div>
                </div>
                <p class="banner">WWW.3D3S.NET <span>录制</span></p>
            </header>

            <section class="workspace">
                <div class="drawing">
                    <div class="viewport">
                        <svg class="model" shape-rendering="crispEdges" aria-label="Drawing">
                            <g transform="translate(-10 -140)">
                                <!-- sheet frames -->
                                <path fill="none" stroke="#50bccc" d="M350.500 140V456.500H613.500V140"/>
                                <path stroke="#40bcd0" stroke-width="2" d="M350 270H614"/>
                                <path stroke="#90d8e0" d="M352 274.500H610"/>
                                <path stroke="#20c4e0" stroke-width="7" stroke-dasharray="3 1" d="M355.500 275V317"/>
                                <path stroke="#20c4e0" d="M352.500 274V317M358.500 274V317"/>

                                <!-- upper sheet -->
                                <g transform="translate(0 -188)">
                                    <use href="#beams"/>
                                    <path stroke="#fff0a0" stroke-width="4" d="M361 333H560"/>
                                    <path stroke="#f8f060" stroke-width="6" d="M556 333H561"/>
                                    <use href="#columns"/>
                                    <use href="#node" x="410" y="427"/><use href="#node" x="422" y="427"/><use href="#node" x="435" y="427"/><use href="#node" x="449" y="427"/>
                                    <use href="#plate" x="465" y="427"/>
                                    <use href="#tick" x="481" y="427"/><use href="#tick" x="492" y="427"/><use href="#tick" x="503" y="427"/>
                                    <path stroke="#c02020" d="M515.500 413V433M511 417.500H520"/><path stroke="#20a860" stroke-width="3" d="M513 424.500H517M512 433H519"/>
                                    <use href="#grid-table"/><use href="#titleblock"/>
                                </g>

                                <!-- lower sheet -->
                                <g fill="none">
                                    <path stroke="#50c8d8" d="M364 294.500H563M364.500 293V323M562.500 293V300M364 321.500H563M364 323.500H563M560.500 313V323M562.500 313V324"/>
                                    <path stroke="#f0f080" d="M365 302.500H557"/>
                                    <path stroke="#f0f060" d="M365 313.500H385M382 312.500H423M414 311.500H460M446 310.500H501M485 309.500H530M511 308.500H548M538 307.500H563"/>
                                    <path stroke="#b0d828" stroke-width="3" stroke-dasharray="2 1" d="M365.500 298V319"/>
                                    <path stroke="#30b060" d="M357 310.500L362 307M363 300.500H369M363 316.500H369"/>
                                    <path stroke="#70c840" stroke-width="7" stroke-dasharray="2 1" d="M555 303H564"/><path stroke="#30a890" d="M563 301.500H567.500V307.500H562"/>
                                    <path stroke="#208c30" stroke-width="2" d="M449 305H452M457 307H461M459 310H462M461 294H465M461 322H467"/>
                                    <path stroke="#f8f080" d="M361 331.500H560M361 334.500H560"/><path stroke="#b8a050" stroke-width="2" d="M361 333H560"/>
                                    <path stroke="#f8f060" stroke-width="5" d="M361 333H363M555 333H560"/>
                                </g>
                                <use href="#beams"/><use href="#columns"/>
                                <use href="#plate" x="415" y="426"/>
                                <use href="#tick" x="429" y="427"/><use href="#tick" x="441" y="427"/><use href="#tick" x="452" y="427"/>
                                <use href="#node" x="463" y="426"/><use href="#node" x="475" y="426"/><use href="#node" x="489" y="427"/><use href="#node" x="503" y="427"/>
                                <path stroke="#c02020" d="M515.500 411V433M511 425.500H520"/><path stroke="#e02020" stroke-width="3" d="M514 425.500H518"/><path stroke="#20a860" stroke-width="3" d="M512 416.500H516M512 433H519"/>
                                <use href="#grid-table"/><use href="#titleblock"/>

                                <!-- crosshair -->
                                <path fill="none" stroke="#fff" d="M469 284.500H491M498 284.500H519M494.500 260V281M494.500 288V309M491.500 281.500H497.500V287.500H491.500ZM493 284.500H496"/>

                                <!-- UCS icon -->
                                <g shape-rendering="auto">
                                    <path stroke="#50f060" stroke-width="2" d="M45.500 546V524"/><path fill="#70f880" d="M45.500 514L49 527H42Z"/>
                                    <path stroke="#e82010" stroke-width="3" d="M50 549H69"/><path fill="#ff2010" d="M68 545L82 549 68 552Z"/>
                                    <circle cx="45" cy="548" r="4" fill="#1868b0"/>
                                    <path fill="none" stroke="#58b878" d="M47 507L50.500 511 54 507M50.500 511V514"/>
                                    <path fill="none" stroke="#c83020" d="M78 538L85 545M85 538L78 545"/>
                                    <path fill="none" stroke="#3068b8" d="M47 538.500H53L47 544.500H54"/>
                                </g>
                            </g>
                        </svg>
                        <div class="vscroll">
                            <button class="sb" aria-label="Scroll up"><svg viewBox="0 0 10 8"><use href="#chevron" transform="rotate(180 5 4)"/></svg></button>
                            <span class="track"></span>
                            <button class="sb thumb" aria-label="Vertical position"></button>
                            <button class="sb" aria-label="Scroll down"><svg viewBox="0 0 10 8"><use href="#chevron"/></svg></button>
                        </div>
                    </div>
                    <div class="tabbar">
                        <button class="nav" aria-label="First tab"><svg viewBox="0 0 10 10"><path d="M1 1H2V9H1ZM8 1V9L3 5Z"/></svg></button>
                        <button class="nav" aria-label="Previous tab"><svg viewBox="0 0 10 10"><path d="M7 1V9L2 5Z"/></svg></button>
                        <button class="nav" aria-label="Next tab"><svg viewBox="0 0 10 10"><path d="M3 1V9L8 5Z"/></svg></button>
                        <button class="nav" aria-label="Last tab"><svg viewBox="0 0 10 10"><path d="M2 1V9L7 5ZM8 1H9V9H8Z"/></svg></button>
                        <button class="tab active"><svg viewBox="0 0 42 14" preserveAspectRatio="none"><path d="M0 0H42L37 14H5Z"/></svg><span>模型</span></button>
                        <button class="tab"><svg viewBox="0 0 62 14" preserveAspectRatio="none"><path fill="none" stroke="#000" d="M0.500 0L4.500 13.500H56.500L61.500 0"/></svg><span>Layout1</span></button>
                        <div class="hscroll">
                            <span class="splitter"></span>
                            <button class="sb" aria-label="Scroll left"><svg viewBox="0 0 10 8"><use href="#chevron" transform="rotate(90 5 4)"/></svg></button>
                            <span class="track"></span>
                            <button class="sb thumb" aria-label="Horizontal position"></button>
                            <span class="track"></span>
                            <button class="sb" aria-label="Scroll right"><svg viewBox="0 0 10 8"><use href="#chevron" transform="rotate(-90 5 4)"/></svg></button>
                        </div>
                    </div>
                </div>
                <aside class="dock">
                    <button class="lock" aria-label="Lock"><svg viewBox="0 0 17 17"><path fill="none" stroke="#222" stroke-width="2" d="M5 8V4C5 1 12 1 12 5"/><path fill="#7c9c9c" stroke="#111" stroke-width="1.500" d="M2.500 8.500H14.500V15.500H2.500Z"/><path fill="none" stroke="#111" d="M7 10.500H10M8.500 10V14M4 12.500H6M11 12.500H13"/></svg></button>
                </aside>
            </section>

            <section class="command">
                <span class="grip"></span>
                <div class="console">
                    <div class="history">
                        <div class="lines">
                            <p>选择对象:</p>
                            <p>指定基点或位移, 或者 [重复(M)]: 指定位移的第二点或 &lt;用第一点作位移&gt;:</p>
                        </div>
                        <div class="console-scroll">
                            <button class="sb" aria-label="History up"><svg viewBox="0 0 10 8"><use href="#chevron" transform="rotate(180 5 4)"/></svg></button>
                            <button class="sb" aria-label="History down"><svg viewBox="0 0 10 8"><use href="#chevron"/></svg></button>
                        </div>
                    </div>
                    <div class="prompt">
                        <label for="cmd">命令:</label>
                        <input id="cmd" type="text">
                        <div class="prompt-scroll">
                            <button class="sb" aria-label="Prompt left"><svg viewBox="0 0 10 8"><use href="#chevron" transform="rotate(90 5 4)"/></svg></button>
                            <button class="sb thumb" aria-label="Prompt position"></button>
                            <span class="track"></span>
                            <button class="sb" aria-label="Prompt right"><svg viewBox="0 0 10 8"><use href="#chevron" transform="rotate(-90 5 4)"/></svg></button>
                        </div>
                    </div>
                </div>
            </section>
        </main>
        <div class="edge edge-right"></div>
    </div>
</body>
</html>
```
FILE: styles.css
```css
* { box-sizing: border-box; }
body { margin: 0; overflow: hidden; background: #e8e7d8; color: #000; font-family: "Liberation Serif", "Noto Sans CJK SC", serif; font-size: 12px; }
p { margin: 0; }
button { padding: 0; border: 0; background: none; font: inherit; color: inherit; }
svg { display: block; }
.defs { position: absolute; width: 0; height: 0; }

/* window */
.desktop { display: grid; grid-template-columns: 8px minmax(0, 1fr) 8px; height: 100vh; }
.app { display: flex; flex-direction: column; min-width: 0; height: 100vh; overflow: hidden; }
.edge-left { border-left: 1px solid #8ab0d8; border-right: 1px solid #3c4c60; box-shadow: inset 1px 0 #c4dcf4, inset -1px 0 #b8d4f0; background: linear-gradient(#5a9ce0 0, #98a4b0 10px, #94bce4 24px, #2a62b8 34px, #2058b4 66px, #c8608c 72px, #6058b0 84px, #c05a98 95px, #a8c0f0 112px, #2060c0 128px, #1e60c0 172px, #40d890 175px, #38d890 198px, #90b8f8 210px, #3a60b0 225px, #1a70d0 260px, #6a7088 290px, #a0d0f8 313px, #6a8098 328px, #2088e0 345px, #70c0ff 376px, #60a8e8 398px, #8890a0 428px, #20a0f0 450px, #a0d8f8 472px, #6090f0 490px, #a0c8f0 513px, #607890 527px, #20a0f0 550px, #203850 577px, #b03040 593px, #80d0f8 608px, #607890 630px, #18a8f8 645px); }
.edge-right { border-left: 1px solid #28506c; border-right: 1px solid #28506c; box-shadow: inset 1px 0 #b8e4f8, inset -1px 0 #b8e4f8; background: linear-gradient(#4a98e0 0, #3a88d8 130px, #2f98e8 150px, #40acff 307px, #e07850 316px, #e8a070 373px, #f0cc98 448px, #f0ecc8 508px, #4cc4ff 515px, #60d8ff 556px, #c0ffff 647px); }

/* toolbars */
.toolbars { position: relative; display: flex; flex: none; flex-direction: column; gap: 1px; padding: 0 0 1px 1px; border-bottom: 2px solid #77756c; }
.row { display: flex; gap: 2px; height: 27px; }
.row-first { height: 25px; gap: 1px; }
.toolbar { display: flex; align-items: center; padding: 2px 3px 0 0; border-top: 1px solid #faf9f2; border-right: 1px solid #a5a396; border-bottom: 1px solid #a5a396; box-shadow: inset 1px 0 #faf9f2; }
.row-first .toolbar { border-top: 0; }
.grip { flex: none; width: 12px; height: 24px; background: linear-gradient(90deg, transparent 2px, #fff 2px, #fff 3px, #aaa899 3px, #aaa899 4px, transparent 4px, transparent 6px, #fff 6px, #fff 7px, #aaa899 7px, #aaa899 8px, transparent 8px); }
.sep { flex: none; width: 6px; height: 21px; background: linear-gradient(90deg, transparent 2px, #c3c1b4 2px, #c3c1b4 3px, #faf9f2 3px, #faf9f2 4px, transparent 4px); }
.tool { display: flex; flex: none; align-items: center; justify-content: center; width: 23px; height: 23px; }
.tool svg { width: 17px; height: 17px; }
.tool.drop { width: 13px; }
.tool.drop svg { width: 7px; }
.tool.letter { font: 17px/23px "Liberation Sans", sans-serif; }
.help b { width: 15px; height: 15px; background: #205080; color: #fff; font: bold 13px/15px "Liberation Sans", sans-serif; text-align: center; }

/* drop-downs */
.combo { position: relative; flex: none; height: 22px; }
.combo select { display: block; width: 100%; height: 22px; padding: 0 20px 0 3px; appearance: none; border: 1px solid #7f9db9; border-radius: 0; background: #fafafa; color: #000; font: inherit; }
.combo i { position: absolute; top: 2px; right: 2px; display: flex; align-items: center; justify-content: center; width: 15px; height: 18px; border-radius: 2px; background: linear-gradient(90deg, #d0defc, #b4c8f4); pointer-events: none; }
.combo i svg { width: 9px; height: 8px; }
.combo.off select { border-color: #c9c7ba; background: #e9e8db; color: #a8a698; opacity: 1; }
.combo.off i { border: 1px solid #dddccf; background: #eeede4; filter: grayscale(1) opacity(.5); }
.swatch { position: absolute; top: 6px; left: 6px; width: 10px; height: 10px; border: 1px solid #000; pointer-events: none; }
.rule { position: absolute; top: 11px; left: 5px; height: 1px; background: #000; pointer-events: none; }
.view-combo { width: 140px; }
.color-combo { width: 150px; }
.color-combo select { padding-left: 19px; }
.type-combo { width: 160px; }
.type-combo select { padding-left: 68px; }
.type-combo .rule { width: 60px; }
.weight-combo { width: 125px; }
.weight-combo select { padding-left: 43px; }
.weight-combo .rule { width: 35px; }
.plot-combo { width: 120px; }
.plot-combo select { padding-left: 8px; }
.dim-combo { width: 99px; }

.banner { position: absolute; top: -13px; right: 38px; color: #f82008; font: bold 28px/32px "DejaVu Sans Mono", "Noto Sans CJK SC", monospace; white-space: pre; }
.banner span { font-size: 31px; }

/* drawing area */
.workspace { display: flex; flex: 1; min-height: 0; border-bottom: 2px solid #faf9f2; }
.drawing { display: flex; flex: 1; flex-direction: column; min-width: 0; padding-left: 1px; border-left: 1px solid #77756c; border-right: 1px solid #a5a396; }
.viewport { display: flex; flex: 1; min-height: 0; padding-right: 5px; background: #fbfaf6; }
.model { flex: 1; min-width: 0; height: 100%; background: #000; }
.vscroll { display: flex; flex-direction: column; align-items: center; gap: 1px; width: 17px; background: linear-gradient(90deg, #eeece4, #fafafa 6px); }
.track { flex: 1; }
.sb { display: flex; flex: none; align-items: center; justify-content: center; width: 16px; height: 16px; border: 1px solid #fff; border-radius: 2px; outline: 1px solid #b8c8e8; outline-offset: -1px; background: linear-gradient(135deg, #d0defc, #b0c6f4); }
.sb svg { width: 10px; height: 8px; }
.vscroll .thumb { background: repeating-linear-gradient(#dce8ff 0 1px, #96b0e4 1px 2px) center / 8px 8px no-repeat, #c4d6fc; }
.hscroll .thumb, .prompt .thumb { background: repeating-linear-gradient(90deg, #dce8ff 0 1px, #96b0e4 1px 2px) center / 8px 8px no-repeat, #c4d6fc; }
.tabbar { display: flex; flex: none; height: 16px; padding-right: 22px; }
.nav { display: flex; flex: none; align-items: center; justify-content: center; width: 18px; height: 14px; border-right: 1px solid #b3b1a4; border-bottom: 1px solid #b3b1a4; }
.nav svg { width: 10px; height: 10px; }
.tab { position: relative; flex: none; width: 62px; height: 14px; line-height: 14px; }
.tab svg { position: absolute; inset: 0; width: 100%; height: 100%; }
.tab span { position: relative; }
.tab.active { width: 42px; margin-left: 3px; color: #fff; font-weight: bold; }
.tab:not(.active) { margin-left: -2px; padding-right: 4px; }
.hscroll { display: flex; align-items: center; width: 34%; margin-left: auto; background: #f5f4f2; }
.splitter { width: 6px; height: 14px; border: 1px solid #c9c7ba; background: #e8e7d8; }
.dock { flex: none; width: 31px; padding: 6px 0 0 3px; border-left: 1px solid #000; }
.lock { display: flex; align-items: center; justify-content: center; width: 21px; height: 21px; border: 1px solid #10106c; background: #b9b9c6; }
.lock svg { width: 17px; height: 17px; }

/* command window */
.command { display: flex; flex: none; height: 44px; margin-top: 2px; padding: 5px 8px 0 4px; border-top: 1px solid #77756c; box-shadow: inset 0 1px #000; }
.console { flex: 1; min-width: 0; border-top: 2px solid #000; border-left: 2px solid #333; background: #f8f8f8; }
.history { display: flex; height: 31px; border-bottom: 1px solid #a5a396; }
.lines { flex: 1; padding-left: 1px; font: 15px/14px "Liberation Mono", "Noto Sans CJK SC", monospace; white-space: nowrap; }
.console-scroll { display: flex; flex: none; flex-direction: column; width: 17px; }
.console-scroll .sb { height: 15px; }
.prompt { display: flex; height: 16px; font: 15px/16px "Liberation Mono", "Noto Sans CJK SC", monospace; }
.prompt label { padding-left: 1px; }
.prompt input { flex: 1; min-width: 0; padding: 0; border: 0; background: none; font: inherit; }
.prompt-scroll { display: flex; width: 64px; margin-right: 18px; background: #eeede4; }
```
